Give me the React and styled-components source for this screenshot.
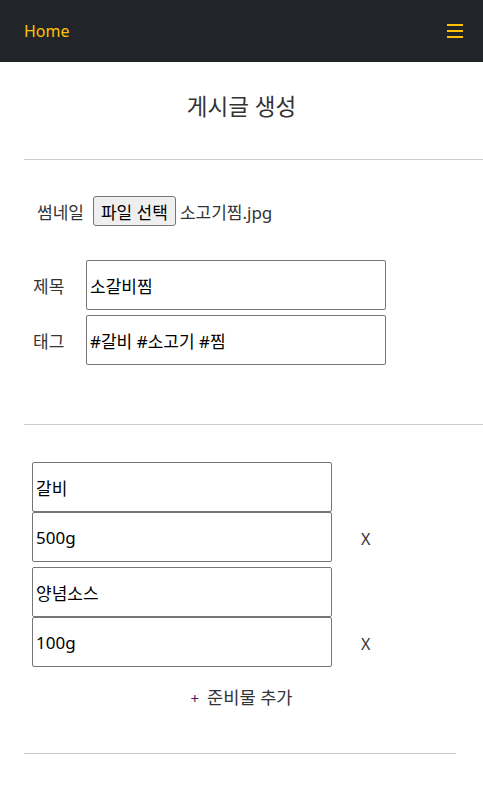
import React from "react";
import styled, { createGlobalStyle } from "styled-components";

const Global = createGlobalStyle`
  html, body { margin: 0; padding: 0; background: #fff; }
  body {
    font-family: "Noto Sans", "Noto Sans CJK KR", sans-serif;
    color: #212529;
    font-size: 16px;
  }
  * { box-sizing: border-box; }
`;

const Nav = styled.header`
  height: 62px;
  background: #212529;
  display: flex;
  align-items: center;
  justify-content: space-between;
  padding: 0 20px 0 24px;
`;

const Brand = styled.a`
  color: #ffc107;
  font-size: 16px;
  text-decoration: none;
  line-height: 1;
`;

const Burger = styled.button`
  width: 16px;
  height: 14px;
  padding: 0;
  border: none;
  background: none;
  display: flex;
  flex-direction: column;
  justify-content: space-between;
  span {
    display: block;
    height: 2px;
    background: #ffc107;
  }
`;

const Main = styled.main`
  padding-left: 24px;
`;

const Title = styled.h1`
  margin: 0 0 0 -24px;
  padding: 30px 0 0;
  height: 97px;
  text-align: center;
  font-size: 22.5px;
  font-weight: 400;
  color: #333;
  line-height: 30px;
`;

const Divider = styled.hr`
  margin: 0;
  border: none;
  border-top: 1px solid #ccc;
  width: ${(p) => p.$w || "100%"};
`;

const Section = styled.section`
  display: flex;
  flex-direction: column;
  padding: ${(p) => p.$pad};
`;

const ThumbRow = styled.div`
  display: flex;
  align-items: center;
  gap: 9px;
  padding-left: 13px;
  height: 30px;
  margin-bottom: 34px;
`;

const Label = styled.label`
  font-size: 17px;
  color: #333;
  width: ${(p) => p.$w || "auto"};
  flex-shrink: 0;
`;

const FileButton = styled.button`
  height: 30px;
  padding: 0 7px;
  font-family: inherit;
  font-size: 17px;
  color: #000;
  background: #efefef;
  border: 1px solid #767676;
  border-radius: 3px;
  margin-right: -5px;
`;

const FileName = styled.span`
  font-size: 17px;
  color: #333;
`;

const FieldRow = styled.div`
  display: flex;
  align-items: center;
  padding-left: 9px;
  margin-bottom: 5px;
`;

const TextInput = styled.input`
  width: 300px;
  height: 50px;
  border: 1px solid #767676;
  border-radius: 2px;
  padding: 0 3px;
  font-family: inherit;
  font-size: 17px;
  color: #000;
  background: #fff;
  outline: none;
`;

const Group = styled.div`
  display: grid;
  grid-template-columns: 300px auto;
  justify-content: start;
  align-items: center;
  margin-left: 8px;
  margin-bottom: 5px;
`;

const Remove = styled.button`
  justify-self: start;
  border: none;
  background: none;
  padding: 0;
  margin: 4px 0 0 29px;
  font-family: inherit;
  font-size: 16px;
  color: #333;
`;

const AddButton = styled.button`
  align-self: center;
  margin: 13px 24px 0 0;
  border: none;
  background: none;
  font-family: inherit;
  font-size: 17.6px;
  line-height: 24px;
  color: #333;
  padding: 0;
  span {
    font-size: 15px;
    color: #4a1a5a;
    margin-right: 8px;
  }
`;

const ingredients = [
  { name: "갈비", amount: "500g" },
  { name: "양념소스", amount: "100g" },
];

export default function App() {
  return (
    <>
      <Global />
      <Nav>
        <Brand href="#">Home</Brand>
        <Burger aria-label="menu">
          <span />
          <span />
          <span />
        </Burger>
      </Nav>
      <Main>
        <Title>게시글 생성</Title>
        <Divider />
        <Section $pad="36px 0 54px">
          <ThumbRow>
            <Label>썸네일</Label>
            <FileButton>파일 선택</FileButton>
            <FileName>소고기찜.jpg</FileName>
          </ThumbRow>
          <FieldRow>
            <Label $w="53px">제목</Label>
            <TextInput defaultValue="소갈비찜" />
          </FieldRow>
          <FieldRow>
            <Label $w="53px">태그</Label>
            <TextInput defaultValue="#갈비 #소고기 #찜" />
          </FieldRow>
        </Section>
        <Divider />
        <Section $pad="37px 0 43px">
          {ingredients.map((it) => (
            <Group key={it.name}>
              <TextInput defaultValue={it.name} />
              <span />
              <TextInput defaultValue={it.amount} />
              <Remove>X</Remove>
            </Group>
          ))}
          <AddButton>
            <span>+</span>준비물 추가
          </AddButton>
        </Section>
        <Divider $w="432px" />
      </Main>
    </>
  );
}
